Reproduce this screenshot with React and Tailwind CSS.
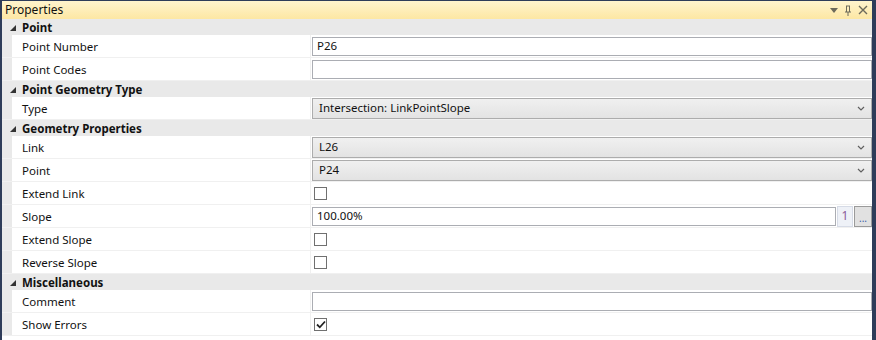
import React from 'react';

const font = { fontFamily: '"Noto Sans", "Open Sans", sans-serif' };

const Chevron = () => (
  <svg width="8" height="5" viewBox="0 0 8 5" className="text-[#606060]">
    <path d="M1 1 L4 4 L7 1" fill="none" stroke="currentColor" strokeWidth="1.2" />
  </svg>
);

const Checkbox = ({ checked }) => (
  <div className="ml-[2px] flex h-[13px] w-[13px] items-center justify-center border border-[#707070] bg-white">
    {checked && (
      <svg width="10" height="9" viewBox="0 0 10 9">
        <path d="M1 4.5 L3.8 7.3 L9 1.5" fill="none" stroke="#222" strokeWidth="1.8" />
      </svg>
    )}
  </div>
);

const Category = ({ title }) => (
  <div className="flex h-[16px] items-center bg-[#e9e9e9] pt-[1px]">
    <div className="flex w-[20px] justify-center pl-[1px]">
      <svg width="6" height="6" viewBox="0 0 6 6">
        <path d="M6 0 L6 6 L0 6 Z" fill="#333" />
      </svg>
    </div>
    <span className="text-[11.5px] font-bold leading-none text-[#111]">{title}</span>
  </div>
);

const Row = ({ label, children }) => (
  <div className="flex h-[23px] border-b border-[#f0f0f0] bg-white">
    <div className="w-[10px] shrink-0 bg-[#e9e9e9]" />
    <div className="flex w-[299px] shrink-0 items-center border-r border-[#f0f0f0] pl-[10px] pt-[1px] text-[11.5px] text-[#111]">
      {label}
    </div>
    <div className="flex min-w-0 flex-1 items-center pl-[1px]">{children}</div>
  </div>
);

const TextBox = ({ value }) => (
  <div className="flex h-[19px] flex-1 items-center border border-[#abadb3] bg-white px-[4px] text-[11.5px] text-[#111]">
    {value}
  </div>
);

const Dropdown = ({ value }) => (
  <div className="flex h-[21px] flex-1 items-center justify-between border border-[#acacac] bg-gradient-to-b from-[#f0f0f0] to-[#e3e3e3] pl-[6px] pr-[6px] text-[11.5px] text-[#111]">
    <span>{value}</span>
    <Chevron />
  </div>
);

export default function App() {
  return (
    <div className="h-[340px] w-[876px] overflow-hidden bg-white" style={font}>
      <div className="flex h-full w-full border-l-2 border-r-4 border-t border-[#2e3c59] bg-white">
        <div className="flex flex-1 flex-col">
          <div className="flex h-[18px] items-center justify-between bg-gradient-to-b from-[#fff4cd] to-[#fde7a3] pl-[3px] pr-[4px]">
            <span className="text-[12px] leading-none text-[#111]">Properties</span>
            <div className="flex items-center gap-[6px] text-[#6d6a5a]">
              <svg width="8" height="5" viewBox="0 0 8 5"><path d="M0 0 L8 0 L4 5 Z" fill="currentColor" /></svg>
              <svg width="8" height="11" viewBox="0 0 8 11">
                <path d="M2 1 H6 M2.5 1 V7 M5.5 1 V7 M1 7 H7 M4 7 V11" fill="none" stroke="currentColor" strokeWidth="1" />
              </svg>
              <svg width="10" height="10" viewBox="0 0 10 10">
                <path d="M1 1 L9 9 M9 1 L1 9" stroke="currentColor" strokeWidth="1.4" />
              </svg>
            </div>
          </div>

          <Category title="Point" />
          <Row label="Point Number"><TextBox value="P26" /></Row>
          <Row label="Point Codes"><TextBox value="" /></Row>

          <Category title="Point Geometry Type" />
          <Row label="Type"><Dropdown value="Intersection: LinkPointSlope" /></Row>

          <Category title="Geometry Properties" />
          <Row label="Link"><Dropdown value="L26" /></Row>
          <Row label="Point"><Dropdown value="P24" /></Row>
          <Row label="Extend Link"><Checkbox /></Row>
          <Row label="Slope">
            <TextBox value="100.00%" />
            <div className="ml-[1px] flex h-[21px] w-[16px] items-center justify-center border border-[#d6dbe6] bg-[#eef1f7] text-[12px] text-[#8a5a9a]">1</div>
            <div className="ml-[1px] flex h-[21px] w-[18px] items-end justify-center border border-[#9a9a9a] bg-[#e1e1e1] pb-[3px] text-[10px] leading-none text-[#3a5ea8]">...</div>
          </Row>
          <Row label="Extend Slope"><Checkbox /></Row>
          <Row label="Reverse Slope"><Checkbox /></Row>

          <Category title="Miscellaneous" />
          <Row label="Comment"><TextBox value="" /></Row>
          <Row label="Show Errors"><Checkbox checked /></Row>
        </div>
      </div>
    </div>
  );
}
